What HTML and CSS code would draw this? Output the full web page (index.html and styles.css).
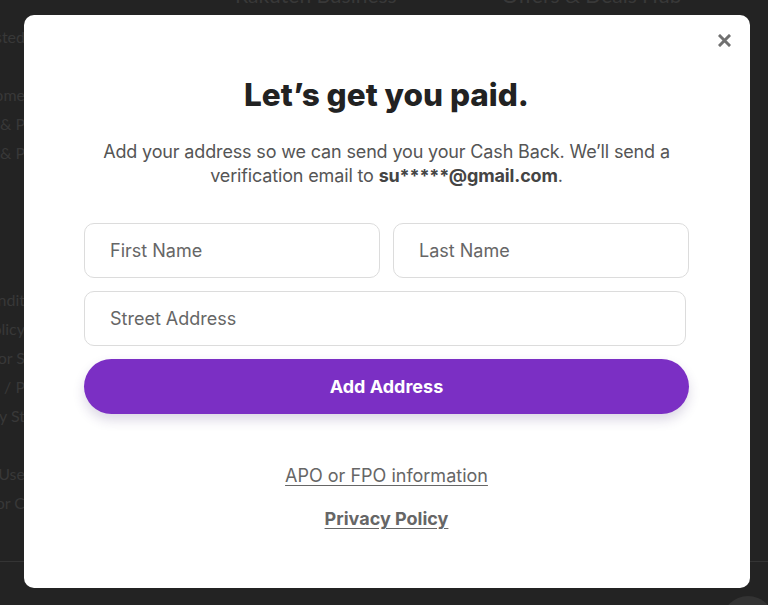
FILE: index.html
```html
<!DOCTYPE html>
<html lang="en">
  <head>
    <meta charset="UTF-8" />
    <meta name="viewport" content="width=device-width, initial-scale=1.0" />
    <title>Add Address</title>
    <link rel="stylesheet" href="styles.css">
  </head>
  <body>
    <div class="page">
      <div class="top-links">
        <span>Rakuten Business</span>
        <span>Offers &amp; Deals Hub</span>
      </div>
      <div class="side-links">
        <span>Trusted</span>
        <span class="gap"></span>
        <span>Home</span>
        <span>Terms &amp; P</span>
        <span>Terms &amp; P</span>
        <span class="gap big"></span>
        <span>Condit</span>
        <span>Policy</span>
        <span>For S</span>
        <span>Help / P</span>
        <span>My St</span>
        <span class="gap"></span>
        <span>Use</span>
        <span>For C</span>
      </div>
      <div class="divider"></div>
      <div class="bubble"></div>
    </div>

    <div class="overlay">
      <div class="modal">
        <svg class="close" width="13" height="13" viewBox="0 0 13 13">
          <path d="M2 2 L11 11 M11 2 L2 11" stroke="#707070" stroke-width="3" stroke-linecap="square" />
        </svg>
        <h1 class="title">Let’s get you paid.</h1>
        <p class="sub">
          Add your address so we can send you your Cash Back. We’ll send a
          verification email to <b>su*****@gmail.com</b>.
        </p>
        <div class="form">
          <div class="row">
            <input type="text" placeholder="First Name" />
            <input type="text" placeholder="Last Name" />
          </div>
          <input class="street" type="text" placeholder="Street Address" />
          <button>Add Address</button>
        </div>
        <a class="link" href="#">APO or FPO information</a>
        <a class="link bold" href="#">Privacy Policy</a>
      </div>
    </div>
  </body>
</html>
```

FILE: styles.css
```css
* {
  margin: 0;
  padding: 0;
  box-sizing: border-box;
}
body {
  background-color: #232323;
  font-family: Inter, "Noto Sans", sans-serif;
  overflow: hidden;
}
.page {
  width: 768px;
  height: 605px;
  position: relative;
  overflow: hidden;
  color: #383838;
  font-family: Lato, sans-serif;
  font-size: 16px;
}
.top-links {
  display: flex;
  padding-left: 235px;
  margin-top: -17px;
  font-size: 21px;
  line-height: 24px;
}
.top-links span {
  width: 320px;
}
.side-links {
  display: flex;
  flex-direction: column;
  align-items: flex-end;
  width: 25px;
  margin-top: 15px;
  line-height: 29px;
  white-space: nowrap;
  overflow: hidden;
}
.side-links .gap {
  height: 29px;
}
.side-links .gap.big {
  height: 118px;
}
.divider {
  position: absolute;
  left: 0;
  right: 0;
  top: 561px;
  border-top: 1px solid #343434;
}
.bubble {
  position: absolute;
  left: 722px;
  top: 596px;
  width: 52px;
  height: 52px;
  border-radius: 50%;
  background-color: #333;
}
.overlay {
  position: fixed;
  inset: 0;
  padding: 15px 18px 17px 24px;
}
.modal {
  position: relative;
  height: 573px;
  background-color: white;
  border-radius: 10px;
  padding: 62px 61px 0 60px;
  display: flex;
  flex-direction: column;
  align-items: center;
}
.close {
  position: absolute;
  top: 19px;
  right: 19px;
}
.title {
  font-size: 31.5px;
  line-height: 36px;
  font-weight: 800;
  color: #222;
}
.sub {
  margin-top: 27px;
  font-size: 18px;
  line-height: 24px;
  color: #555;
  text-align: center;
  letter-spacing: -0.15px;
}
.sub b {
  color: #444;
}
.form {
  width: 100%;
  margin-top: 35px;
  display: flex;
  flex-direction: column;
  gap: 13px;
}
.row {
  display: flex;
  gap: 13px;
}
input {
  height: 55px;
  border: 1px solid #dcdcdc;
  border-radius: 10px;
  padding-left: 25px;
  font-family: Inter, "Noto Sans", sans-serif;
  font-size: 18px;
  color: #333;
}
.row input {
  flex: 1;
  min-width: 0;
}
input::placeholder {
  color: #666;
}
.street {
  margin-right: 3px;
}
button {
  height: 55px;
  border: none;
  border-radius: 28px;
  background-color: #7b2fc4;
  color: white;
  font-family: Inter, "Noto Sans", sans-serif;
  font-size: 18px;
  font-weight: 700;
  box-shadow: 0 6px 12px rgba(60, 40, 110, 0.18);
}
.link {
  margin-top: 50px;
  font-size: 18px;
  line-height: 24px;
  color: #666;
  text-underline-offset: 3px;
}
.link.bold {
  margin-top: 19px;
  font-weight: 700;
}
```
